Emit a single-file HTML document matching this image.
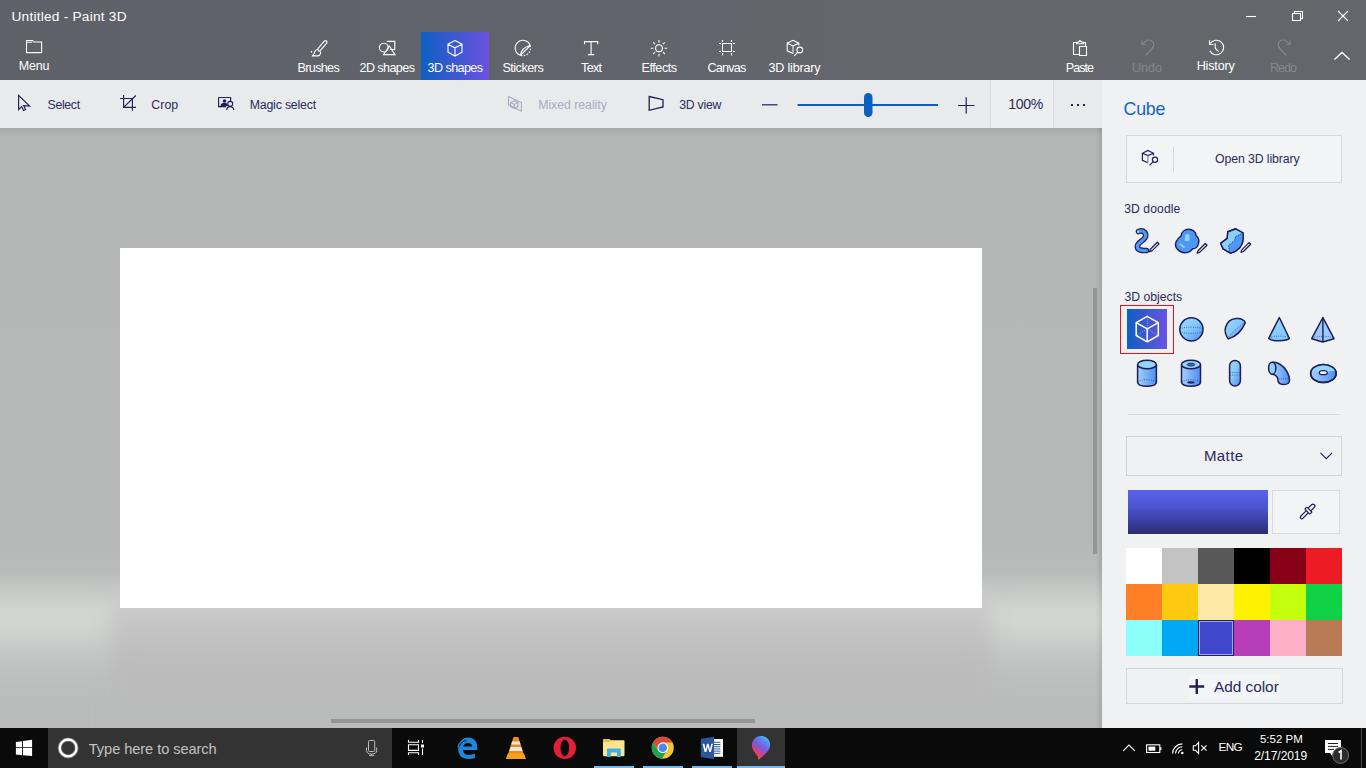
<!DOCTYPE html>
<html><head><meta charset="utf-8">
<style>
*{margin:0;padding:0;box-sizing:border-box}
html,body{width:1366px;height:768px;overflow:hidden;font-family:"Liberation Sans",sans-serif;background:#b6b8b7;position:relative}
.a{position:absolute}
.t{position:absolute;white-space:nowrap;line-height:1}
#hdr{left:0;top:0;width:1366px;height:80px;background:linear-gradient(90deg,#5e6168 0%,#60636a 35%,#64666c 65%,#66676d 80%,#64666c 100%)}
#hl{left:421px;top:32px;width:68px;height:48px;background:linear-gradient(90deg,#0d5fc3,#2f5acb 35%,#6a52e2)}
#tb2{left:0;top:80px;width:1102px;height:48px;background:#e9eaec}
#cv{left:0;top:128px;width:1102px;height:600px;background:linear-gradient(180deg,#b5b7b6 0px,#b6b8b7 410px,#babcbb 445px,#c8cac8 465px,#d2d4d2 480px,#d4d6d4 492px,#cfd1cf 505px,#c5c7c6 525px,#bec0bf 548px,#babcbb 575px,#babcbb 600px)}
#rp{left:1102px;top:80px;width:264px;height:648px;background:#f0f1f3}
#task{left:0;top:728px;width:1366px;height:40px;background:#0a0a0a}
.lbl{font-size:11.3px;color:#fff;text-align:center;width:68px}
.nv{color:#2a2a5c}
</style></head><body>
<div id="hdr" class="a"></div>
<div id="hl" class="a"></div>

<div id="tb2" class="a"></div>
<div class="a" style="left:990px;top:80px;width:64px;height:48px;border-left:1px solid #d9dce4;border-right:1px solid #d9dce4;background:#eceef0"></div>

<div id="cv" class="a"></div>
<div class="a" style="left:110px;top:598px;width:882px;height:160px;background:linear-gradient(180deg,#c9cac9 0px,#c8c9c8 12px,#c0c1c0 40px,#babbba 70px,#babcbb 160px);filter:blur(10px)"></div>
<div class="a" style="left:0;top:128px;width:1102px;height:8px;background:linear-gradient(180deg,rgba(0,0,0,0.08),rgba(0,0,0,0))"></div>
<div class="a" style="left:120px;top:248px;width:862px;height:360px;background:#fff"></div>
<div class="a" style="left:331px;top:719px;width:424px;height:4px;background:#959595"></div>
<div class="a" style="left:1093px;top:288px;width:4px;height:266px;background:#959595"></div>

<div class="a" style="left:1096px;top:128px;width:6px;height:600px;background:linear-gradient(90deg,rgba(0,0,0,0),rgba(0,0,0,0.1))"></div>
<div id="rp" class="a"></div>
<div class="a" style="left:1126px;top:135px;width:216px;height:48px;border:1px solid #d6d7db;background:#f3f4f6"></div>
<div class="a" style="left:1173px;top:147px;width:1px;height:25px;background:#d6d7db"></div>
<div class="a" style="left:1120px;top:305px;width:54px;height:49px;border:1px solid #e8121e"></div>
<div class="a" style="left:1127px;top:309px;width:40px;height:40px;background:linear-gradient(90deg,#0d5fc3,#2f5acb 35%,#6a52e2)"></div>
<div class="a" style="left:1128px;top:414px;width:212px;height:1px;background:#d8d9de"></div>
<div class="a" style="left:1126px;top:436px;width:216px;height:40px;border:1px solid #cfd3dc"></div>
<div class="a" style="left:1128px;top:490px;width:140px;height:44px;background:linear-gradient(180deg,#5b63ef,#4a51c8 45%,#2b2b72)"></div>
<div class="a" style="left:1272px;top:490px;width:68px;height:44px;border:1px solid #d8d9dd;background:#f3f4f6"></div>
<div class="a" style="left:1126px;top:548px;width:216px;height:108px;display:grid;grid-template-columns:repeat(6,36px);grid-template-rows:repeat(3,36px)">
<div style="background:#fff"></div><div style="background:#c3c3c3"></div><div style="background:#585858"></div><div style="background:#000"></div><div style="background:#880015"></div><div style="background:#ed1c24"></div>
<div style="background:#ff7f27"></div><div style="background:#ffc90e"></div><div style="background:#fde9a5"></div><div style="background:#fff200"></div><div style="background:#c4ff0e"></div><div style="background:#0ed145"></div>
<div style="background:#8cfffb"></div><div style="background:#00a8f3"></div><div style="background:#3f48cc;border:1px solid #1c1f5c;box-shadow:inset 0 0 0 1px #a3a8f0"></div><div style="background:#b83dba"></div><div style="background:#ffaec8"></div><div style="background:#b97a56"></div>
</div>
<div class="a" style="left:1126px;top:668px;width:217px;height:36px;border:1px solid #d6d7db"></div>
<div class="a" style="left:1189px;top:675px;width:91px;height:24px;background:#f4f5f7"></div>

<div id="task" class="a"></div>
<div class="a" style="left:48px;top:728px;width:344px;height:40px;background:#333"></div>
<div class="a" style="left:737px;top:728px;width:48px;height:40px;background:#333"></div>
<div class="a" style="left:594px;top:766px;width:40px;height:2px;background:#76b9ed"></div>
<div class="a" style="left:643px;top:766px;width:40px;height:2px;background:#76b9ed"></div>
<div class="a" style="left:692px;top:766px;width:40px;height:2px;background:#76b9ed"></div>
<div class="a" style="left:737px;top:766px;width:48px;height:2px;background:#76b9ed"></div>

<div class="t" style="left:11.5px;top:10.0px;font-size:13.7px;letter-spacing:0.22px;color:#fff;">Untitled - Paint 3D</div>
<div class="t" style="left:18.7px;top:60.0px;font-size:12.5px;letter-spacing:-0.17px;color:#fff;">Menu</div>
<div class="t" style="left:297.6px;top:61.8px;font-size:12.6px;letter-spacing:-0.68px;color:#fff;">Brushes</div>
<div class="t" style="left:359.5px;top:61.8px;font-size:12.6px;letter-spacing:-0.59px;color:#fff;">2D shapes</div>
<div class="t" style="left:427.6px;top:61.8px;font-size:12.6px;letter-spacing:-0.59px;color:#fff;">3D shapes</div>
<div class="t" style="left:502.4px;top:61.8px;font-size:12.6px;letter-spacing:-0.49px;color:#fff;">Stickers</div>
<div class="t" style="left:581.0px;top:61.8px;font-size:12.6px;letter-spacing:-0.67px;color:#fff;">Text</div>
<div class="t" style="left:641.6px;top:61.8px;font-size:12.6px;letter-spacing:-0.47px;color:#fff;">Effects</div>
<div class="t" style="left:707.6px;top:61.8px;font-size:12.6px;letter-spacing:-0.82px;color:#fff;">Canvas</div>
<div class="t" style="left:768.4px;top:61.8px;font-size:12.6px;letter-spacing:-0.19px;color:#fff;">3D library</div>
<div class="t" style="left:1065.7px;top:61.8px;font-size:12.6px;letter-spacing:-0.95px;color:#fff;">Paste</div>
<div class="t" style="left:1132.0px;top:61.8px;font-size:12.6px;letter-spacing:0.0px;color:#85878d;">Undo</div>
<div class="t" style="left:1196.7px;top:60.0px;font-size:12.6px;letter-spacing:-0.17px;color:#fff;">History</div>
<div class="t" style="left:1270.0px;top:61.8px;font-size:12.6px;letter-spacing:-1.0px;color:#85878d;">Redo</div>
<div class="t" style="left:47.5px;top:99.0px;font-size:12.3px;letter-spacing:-0.32px;color:#2a2a5c;">Select</div>
<div class="t" style="left:151.3px;top:99.0px;font-size:12.3px;letter-spacing:0.07px;color:#2a2a5c;">Crop</div>
<div class="t" style="left:249.7px;top:99.0px;font-size:12.3px;letter-spacing:-0.17px;color:#2a2a5c;">Magic select</div>
<div class="t" style="left:538.2px;top:99.0px;font-size:12.3px;letter-spacing:-0.03px;color:#a9abc4;">Mixed reality</div>
<div class="t" style="left:679.3px;top:99.0px;font-size:12.3px;letter-spacing:-0.28px;color:#2a2a5c;">3D view</div>
<div class="t" style="left:1008.3px;top:97.2px;font-size:14.1px;letter-spacing:-0.37px;color:#2a2a5c;">100%</div>
<div class="t" style="left:1123.6px;top:101.0px;font-size:17.8px;letter-spacing:-0.27px;color:#1565c0;">Cube</div>
<div class="t" style="left:1215.0px;top:153.0px;font-size:12.3px;letter-spacing:-0.11px;color:#2a2a5c;">Open 3D library</div>
<div class="t" style="left:1124.2px;top:203.0px;font-size:12.1px;letter-spacing:0.12px;color:#2a2a5c;">3D doodle</div>
<div class="t" style="left:1124.6px;top:291.0px;font-size:12.2px;letter-spacing:0.0px;color:#2a2a5c;">3D objects</div>
<div class="t" style="left:1203.9px;top:448.0px;font-size:15.0px;letter-spacing:0.42px;color:#2a2a5c;">Matte</div>
<div class="t" style="left:1214.0px;top:679.0px;font-size:15.4px;letter-spacing:-0.03px;color:#2a2a5c;">Add color</div>
<div class="t" style="left:88.8px;top:741.6px;font-size:14.6px;letter-spacing:-0.06px;color:#c2c2c2;">Type here to search</div>
<div class="t" style="left:1218.6px;top:742.4px;font-size:11.8px;letter-spacing:-0.8px;color:#fff;">ENG</div>
<div class="t" style="left:1259.9px;top:733.6px;font-size:11.5px;letter-spacing:0.02px;color:#fff;">5:52 PM</div>
<div class="t" style="left:1254.2px;top:750.4px;font-size:12px;letter-spacing:-0.05px;color:#fff;">2/17/2019</div>
<svg class="a" style="left:0;top:0" width="1366" height="768" viewBox="0 0 1366 768" fill="none">
<g stroke="#fff" stroke-width="1.1" fill="none">
<!-- window controls -->
<path d="M1246 16.5H1256"/>
<path d="M1292.5 13.5H1300.5V20.5H1292.5Z M1294.5 13.5V11.5H1302.5V18.5H1300.5"/>
<path d="M1338 11L1348 21M1348 11L1338 21"/>
<!-- folder -->
<path d="M26.5 40.5H32.5L33.8 42H41.6V52.6H26.5Z M26.8 42.3H32"/>
<!-- brush -->
<rect x="-6.3" y="-1.55" width="12.6" height="3.1" rx="1.55" transform="translate(322.4 45.8) rotate(130.6)"/>
<path d="M318.3 49.3C316.2 49.5 314.6 51.2 314.3 53.2L312.5 55.9H317.6C319.6 55.9 320.9 53.9 320.6 51.6"/>
<rect x="310.9" y="51" width="1.2" height="1.6" fill="#fff" stroke="none"/>
<!-- 2d shapes -->
<circle cx="383.8" cy="47.6" r="4.4"/>
<path d="M386.6 41.4H394.8V49.5H390"/>
<path d="M389.3 46L395 54.6H383.6Z"/>
<!-- 3d shapes cube -->
<path d="M455 40.5L462 44.2V52.2L455 56L448 52.2V44.2Z M448 44.2L455 47.8L462 44.2 M455 47.8V56"/>
<!-- stickers -->
<path d="M530.2 45.5A7.7 7.7 0 1 0 520.5 55.3"/>
<path d="M520.5 55.3Q521.5 47.5 530.2 45.5M520.5 55.3L530.2 45.5"/>
<path d="M530.2 45.5A7.7 7.7 0 0 1 520.5 55.3" stroke-dasharray="1.6 1.4"/>
<!-- text T -->
<path d="M584.5 44.2V41.6H597.8V44.2 M591.1 41.6V54.5 M588 54.6H594.2"/>
<!-- effects sun -->
<circle cx="659" cy="48.2" r="3.4"/>
<path d="M659 40V42.6M659 53.8V56.4M650.8 48.2H653.4M664.6 48.2H667.2M653.2 42.4L655 44.2M663 52.2L664.8 54M664.8 42.4L663 44.2M655 52.2L653.2 54"/>
<!-- canvas -->
<path d="M722.5 43.5H731.5V51.5H722.5Z"/>
<path d="M722.5 40V42M731.5 40V42M722.5 53V55.5M731.5 53V55.5M719 43.5H721M733 43.5H735M719 51.5H721M733 51.5H735"/>
<!-- 3d library -->
<path d="M798.8 45.6V43.2L793 40.3L787.2 43.2V50.8L793 53.6 M787.2 43.2L793 46L798.8 43.2"/><path d="M793 46V53.6" stroke="#c8c9cc" stroke-width="1.5"/>
<circle cx="799.8" cy="50" r="2.9"/>
<path d="M797.8 52.2L794.3 55.9"/>
<!-- paste -->
<path d="M1076.5 42.5H1073.5V54.5H1079 M1083.5 42.5H1085.5V46 M1076.5 43.8V42.2H1078.2L1080 40.5L1081.8 42.2H1083.5V43.8Z"/>
<path d="M1079.5 46.5H1086.5V55.5H1079.5Z"/>
<!-- history -->
<path d="M1210.2 43.5A7.3 7.3 0 1 1 1209.8 50.8"/>
<path d="M1209.5 40.3V44.5H1213.6"/>
<path d="M1215.2 43.2V48.2L1218.6 51.6"/>
<!-- chevron -->
<path d="M1334.4 59.5L1342 52.5L1349.6 59.5" stroke-width="1.3"/>
</g>
<g stroke="#201f58" stroke-width="1.15" fill="none">
<path d="M18.6 95.4V109.6L21.6 106.6L23.6 110.6L25.6 109.6L23.6 105.6L29.6 106Z"/>
<path d="M120 98.5H132.4V110.8M123.6 95V107.4H136M123.6 107.4L135.8 95.5"/>
<path d="M218.6 97.5H230.6V102M226 106.6H218.6V97.5"/>
<path d="M221 106.5C221 104.5 222.5 103.4 224.5 103.4C226.3 103.4 227.3 104.4 227.5 105.5Z" fill="#201f58"/>
<circle cx="224.5" cy="101" r="1.8" fill="#201f58" stroke="none"/>
<circle cx="230.2" cy="103.8" r="2.5"/>
<path d="M226.6 109.8C227 107.6 228.3 106.6 230.2 106.6C232.1 106.6 233.4 107.6 233.8 109.8"/>
<path d="M649.2 96.5L663 99.7V107L649.2 110.3Z" stroke-width="1.3"/>
<rect x="1071" y="104" width="2" height="2" fill="#201f58" stroke="none"/>
<rect x="1077" y="104" width="2" height="2" fill="#201f58" stroke="none"/>
<rect x="1083" y="104" width="2" height="2" fill="#201f58" stroke="none"/>
<path d="M762 104.8H777.5" stroke-width="1.2"/>
<path d="M958 105.5H974.5M966.2 97.3V113.6" stroke-width="1.2"/>
</g>
<g stroke="#a7a9c0" stroke-width="1.1" fill="none">
<path d="M508.5 96.5L521.4 102.6V111.2L508.5 104.8Z"/>
<path d="M514.3 100.8L518 102.6V106.6L514.3 108.4L510.6 106.6V102.6Z M510.6 102.6L514.3 104.4L518 102.6M514.3 104.4V108.4"/>
</g>
<path d="M797.5 105H938" stroke="#0b5fc1" stroke-width="2"/>
<rect x="864" y="93" width="8.5" height="24" rx="4.2" fill="#0b5fc1"/>
<defs>
<linearGradient id="gb" x1="0" y1="0" x2="1" y2="0"><stop offset="0" stop-color="#a6d0fd"/><stop offset="1" stop-color="#4b8ff4"/></linearGradient>
<linearGradient id="gbt" x1="0" y1="0" x2="0" y2="1"><stop offset="0" stop-color="#93d5fd"/><stop offset="1" stop-color="#7fc6fc"/></linearGradient>
<linearGradient id="gs" x1="0" y1="0" x2="1" y2="1"><stop offset="0" stop-color="#9ad9fe"/><stop offset="0.45" stop-color="#86cafc"/><stop offset="1" stop-color="#4d8ff3"/></linearGradient>
</defs>
<!-- right panel navy icons -->
<g stroke="#201f58" stroke-width="1.2" fill="none">
<path d="M1153.5 155.6V153.3L1147.9 150.5L1142.4 153.3V160.4L1147.9 162.8 M1142.4 153.3L1147.9 155.6L1153.5 153.3"/>
<path d="M1147.9 155.6V162.6" stroke="#8587a8"/>
<circle cx="1155" cy="159.7" r="2.6"/>
<path d="M1153 161.8L1149.5 165.3"/>
<g transform="translate(1308.9 510.1) rotate(-45)">
<path d="M-2.2 -1.5H-9.8C-11 -1.5 -11.6 -0.8 -11.6 0C-11.6 0.8 -11 1.5 -9.8 1.5H-2.2"/>
<rect x="-2.2" y="-3.6" width="3" height="7.2" rx="0.8"/>
<path d="M0.8 -1.9H5.6C6.9 -1.9 7.7 -1 7.7 0C7.7 1 6.9 1.9 5.6 1.9H0.8"/>
</g>
<path d="M1320.5 452.8L1326.3 458.6L1332.1 452.8" stroke-width="1.1"/>
<path d="M1189.3 686.5H1204.2M1196.75 679V694" stroke-width="2.4"/>
</g>
<!-- doodles -->
<path d="M1138.5 231.5C1143.5 229.5 1147.5 233.5 1144.8 238C1142.6 241.4 1137.4 242.6 1137.4 246.5C1137.4 250.4 1142 250.7 1146.4 250.5" stroke="#1f1d52" stroke-width="5.6" stroke-linecap="round" fill="none"/>
<path d="M1138.5 231.5C1143.5 229.5 1147.5 233.5 1144.8 238C1142.6 241.4 1137.4 242.6 1137.4 246.5C1137.4 250.4 1142 250.7 1146.4 250.5" stroke="#4f97f6" stroke-width="3.2" stroke-linecap="round" fill="none"/>
<circle cx="1138.2" cy="231.7" r="1.3" fill="#8fd2fd"/>
<path d="M1181 236C1181.5 231.5 1185 229.3 1188.6 229.3C1192.8 229.3 1195.8 232 1196 235.5C1198.5 237.5 1199.2 240.5 1198.6 243C1198 246.5 1195.5 248.8 1192.5 248.8C1190.8 251.2 1188 252.8 1184.5 252.8C1182 252.8 1179.5 251.6 1177.6 249.6C1175.5 247.3 1175 244.5 1176.2 241.5C1177.2 239 1179 237.5 1181 236Z" fill="#4f97f6" stroke="#1f1d52" stroke-width="1.4"/>
<path d="M1185.5 235C1186.5 233.5 1188.6 233.6 1189.5 235.5L1189.6 240.3C1188.4 241.5 1186.3 241.5 1184.5 240.2Z" fill="#8dd1fd"/>
<path d="M1180.5 244.2L1184 247.2" stroke="#8dd1fd" stroke-width="1.8" stroke-linecap="round"/>
<path d="M1220.6 243.3L1227.2 238.3L1227.7 231.8L1235.5 228.8L1243 232.8C1243.8 239 1243 244 1239.5 248C1237 250.8 1233.5 252.5 1230.6 253.2L1223 248.8Z" fill="#8ad0fd" stroke="#1f1d52" stroke-width="1.3"/>
<path d="M1242.8 233C1240.5 234 1238 235 1235.5 236.5L1234.5 240.5L1228.5 245.5L1229.5 252.8C1233.5 252 1237 250.5 1239.5 248C1243 244 1243.8 239 1243 232.8Z" fill="#4f97f6"/>
<path d="M1220.6 243.3L1227.2 238.3L1227.7 231.8L1235.5 228.8L1243 232.8C1243.8 239 1243 244 1239.5 248C1237 250.8 1233.5 252.5 1230.6 253.2L1223 248.8Z" fill="none" stroke="#1f1d52" stroke-width="1.3"/>
<path d="M1242.5 233.2L1235.5 236.6L1234.5 240.6L1228.6 245.4L1229.6 252.6" stroke="#1f1d52" stroke-width="0.8" stroke-dasharray="1 1"/>
<g stroke="#1f1d52" stroke-width="1.25" fill="#f0f1f3" stroke-linejoin="round">
<path d="M1157.3 242.2L1159 243.9L1152 250.9L1149.6 251.7L1150.4 249.3Z"/>
<path d="M1205.3 243.5L1207 245.2L1199.6 252.4L1197.2 253.2L1198 250.8Z"/>
<path d="M1249 242.6L1250.7 244.3L1243.4 251.5L1241 252.3L1241.8 249.9Z"/>
</g>
<!-- 3d objects -->
<g stroke="#fff" stroke-width="1.5" fill="none" stroke-linejoin="round">
<path d="M1147.2 316.3L1158.3 322.6V335.5L1147.2 341.8L1136.2 335.5V322.6Z M1136.2 322.6L1147.2 328.9L1158.3 322.6 M1147.2 328.9V341.8"/>
</g>
<g stroke="#fff" stroke-width="0.7" stroke-dasharray="1 1.2" fill="none" opacity="0.7">
<path d="M1147.2 316.5V329 M1136.5 335.3L1147.2 329L1158 335.3"/>
</g>
<g stroke="#1f1d52" stroke-width="1.5" stroke-linejoin="round">
<circle cx="1191.4" cy="329.3" r="11.6" fill="url(#gs)"/>
<path d="M1235.9 318.6C1241 318 1244 320 1245.3 322.6C1242 330.5 1236 336.5 1228.4 338.9C1225.6 335.5 1224.5 331.5 1225.5 327.5C1226.8 322.5 1230.5 319.2 1235.9 318.6Z" fill="url(#gs)"/>
<path d="M1279.3 317.5L1289.3 338.3C1287 341.6 1271.5 341.6 1268.7 338.3Z" fill="url(#gbt)"/>
<path d="M1322.9 317.5L1334 338.7L1322.9 342L1311.7 338.7Z" fill="#9cc9fd"/>
<path d="M1322.9 317.5V342" stroke-width="1.4"/>
<path d="M1137.6 364.5V382C1137.6 387.8 1156.4 387.8 1156.4 382V364.5" fill="url(#gb)"/>
<ellipse cx="1147" cy="364.5" rx="9.4" ry="4.2" fill="#93d5fd"/>
<path d="M1181.5 364.5V382C1181.5 387.8 1200.5 387.8 1200.5 382V364.5" fill="url(#gb)"/>
<ellipse cx="1191" cy="364.5" rx="9.5" ry="4.2" fill="#93d5fd"/>
<rect x="1229.6" y="360.4" width="10.8" height="25.6" rx="5.4" fill="url(#gs)"/>
<path d="M1272.5 362.2C1280.5 361.8 1288.5 370 1289.5 379.5C1290 383.5 1287 384.5 1283.5 384.5C1279.5 384.5 1277.8 382 1277.8 379C1277.5 376.5 1275.5 374.8 1272.5 374.2Z" fill="url(#gb)"/>
<ellipse cx="1272.2" cy="368.2" rx="3.6" ry="6" fill="#8fd2fd"/>
<ellipse cx="1323.4" cy="373.4" rx="12.8" ry="9" fill="url(#gb)"/>
</g>
<path d="M1310.8 371.5C1312 366 1317 364.5 1323.4 364.5C1330 364.5 1334.8 366 1336 371.5C1333 371 1330 370.6 1327.6 372.8H1319.2C1317 370.6 1314 371 1310.8 371.5Z" fill="#93d5fd"/>
<ellipse cx="1323.4" cy="373.4" rx="12.8" ry="9" fill="none" stroke="#1f1d52" stroke-width="1.5"/>
<ellipse cx="1323.3" cy="372.7" rx="4" ry="2" fill="#fff" stroke="#1f1d52" stroke-width="1.2"/>
<ellipse cx="1191" cy="364.6" rx="3.8" ry="1.5" fill="#3d68c8" stroke="#1f1d52" stroke-width="0.8"/>
<ellipse cx="1191" cy="382.4" rx="3.6" ry="1.1" fill="#1f1d52"/>
<g stroke="#1f1d52" stroke-width="0.8" stroke-dasharray="0.9 1.3" fill="none" opacity="0.75">
<path d="M1180 329C1184 326.5 1199 326.5 1203 329 M1180 331.5C1184 334 1199 334 1203 331.5"/>
<path d="M1229 336.5C1233 332 1240 326 1244 322.8"/>
<path d="M1269.5 337.6C1273 335.6 1285.5 335.6 1289 337.6"/>
<path d="M1312.5 338C1317 335.8 1329 335.8 1333.5 338"/>
<path d="M1138 382C1141 379 1153 379 1156 382"/>
<path d="M1182 382C1185 379 1197 379 1200 382"/>
<path d="M1230 372.5H1240M1230 375H1240"/>
<path d="M1278.5 378.8H1289"/>
</g>
<!-- taskbar -->
<g fill="#fff">
<path d="M15.9 742L22.05 741.2V747.2H15.9Z M22.9 741.1L32.1 739.8V747.2H22.9Z M15.9 748H22.05V755.2L15.9 754.5Z M22.9 748H32.1V756.1L22.9 755.3Z"/>
</g>
<circle cx="68.15" cy="747.9" r="8.5" stroke="#a0a0a0" stroke-width="4" fill="none" opacity="0.6"/>
<circle cx="68.15" cy="747.9" r="8.4" stroke="#fff" stroke-width="2.3" fill="none"/>
<g stroke="#bdbdbd" stroke-width="1" fill="none">
<rect x="368.5" y="740.5" width="6.2" height="11" rx="1"/>
<path d="M366.5 747.5V750.5C366.5 753 368.5 754 371.6 754C374.7 754 376.7 753 376.7 750.5V747.5M371.6 754V755.6M369 755.6H374.2"/>
</g>
<g stroke="#fff" stroke-width="1.1" fill="none">
<path d="M408.5 740V742.2H418.5V740M408.5 744.8H418.5V750.4H408.5Z M408.5 755V752.7H418.5V755 M422.5 740V743M422.5 748.5V755"/>
</g>
<rect x="421" y="744.5" width="3" height="3" fill="#fff"/>
<!-- edge -->
<path d="M477.3 749.9H462.9C463.3 753.3 465.8 755 469.3 755C471.5 755 473.5 754.5 475 753.6V757.8C473.2 758.6 470.8 759 468.5 759C461.8 759 458.2 755 458.2 749C458.2 742.5 462.5 737.6 468 737.6C473.8 737.6 477.3 741.5 477.3 747.3Z" fill="#1e86dc"/>
<path d="M463.2 746.6C463.6 744.4 465.5 743 468 743C470.5 743 472.2 744.4 472.3 746.6Z" fill="#0a0a0a"/>
<path d="M457.3 747C458.3 742.5 461.8 739.6 466.3 739.8C462.8 741.2 460.5 743.5 459.6 746.6Z" fill="#1e86dc"/>
<path d="M459.3 746.4C460.6 742.6 463.2 740.8 466.4 740.6" stroke="#0a0a0a" stroke-width="0.9" fill="none"/>
<!-- vlc -->
<path d="M513.5 737H518.3L524 755H507.8Z" fill="#f28c18"/>
<path d="M512.2 741.5H519.6L520.6 744.5H511.2Z M510.5 747H521.3L522.6 751H509.3Z" fill="#e6e6e6"/>
<path d="M507.8 753.5H524L526 759H505.8Z" fill="#f6a21a"/>
<!-- opera -->
<ellipse cx="564.8" cy="747.9" rx="11.2" ry="11.2" fill="#e3203a"/>
<ellipse cx="564.8" cy="747.9" rx="4.3" ry="8.4" fill="#0a0a0a"/>
<!-- explorer -->
<path d="M603 740.5C603 739.6 603.5 739 604.4 739H609.4L610.6 740.2H623.5C624 740.2 624.5 740.6 624.5 741.2V755.3C624.5 755.8 624 756.2 623.5 756.2H604C603.5 756.2 603 755.8 603 755.3Z" fill="#ffe48e"/>
<path d="M603 740.5C603 739.6 603.5 739 604.4 739H609.4L611 740.6L609.8 742H603Z" fill="#f0bd3c"/>
<path d="M607 757V749.5C607 748.9 607.5 748.5 608 748.5H619.8C620.4 748.5 620.8 748.9 620.8 749.5V757H617V752.5H610.8V757Z" fill="#38b1ee"/>
<!-- chrome -->
<circle cx="662.8" cy="747.7" r="11" fill="#f4c534"/>
<path d="M662.8 736.7A11 11 0 0 0 653.2 742.3L658.2 750.5L662.8 742.5H672.5A11 11 0 0 0 662.8 736.7Z" fill="#dc4a3c"/>
<path d="M653.2 742.3A11 11 0 0 0 662 758.7L667 750.3L662.8 752.5L658.2 750.5Z" fill="#22a150"/>
<circle cx="662.8" cy="747.7" r="5.4" fill="#fff"/>
<circle cx="662.8" cy="747.7" r="4.3" fill="#4c88ef"/>
<!-- word -->
<rect x="713.5" y="739" width="9.5" height="17.8" fill="#fff"/>
<g stroke="#2b579a" stroke-width="1"><path d="M714 742.3H720.4M714 744.5H720.4M714 746.7H720.4M714 748.9H720.4M714 751.1H720.4M714 753.3H720.4"/></g>
<path d="M700.8 738.8L714 736.8V759.2L700.8 757Z" fill="#2b579a"/>
<path d="M702.5 743.7H704.4L705.6 749.5L707 743.7H708.6L710 749.5L711.2 743.7H712.9L710.9 752H709.2L707.8 746.5L706.4 752H704.6Z" fill="#fff"/>
<!-- paint3d drop -->
<defs>
<linearGradient id="p3" x1="0.85" y1="0" x2="0.25" y2="1"><stop offset="0" stop-color="#2ee3ee"/><stop offset="0.22" stop-color="#5b8cf2"/><stop offset="0.5" stop-color="#7b58de"/><stop offset="0.72" stop-color="#d8407e"/><stop offset="0.86" stop-color="#ef4a52"/><stop offset="1" stop-color="#f8a81c"/></linearGradient>
</defs>
<path d="M761 736C766 736 770.2 739.8 770.2 744.8C770.2 749.5 766.5 753 762.5 756.5C761 757.8 759.8 759 758.5 760C758.8 757.5 757.5 755.5 755.2 753C753 750.5 751.9 748 751.9 745C751.9 740 755.9 736 761 736Z" fill="url(#p3)"/>
<!-- tray -->
<g stroke="#fff" stroke-width="1.1" fill="none">
<path d="M1123.3 750.8L1128.9 745L1134.9 750.8"/>
<rect x="1146.6" y="744.8" width="13.2" height="7.7"/>
<path d="M1172.6 753.6A9.7 9.7 0 0 1 1182.3 743.9M1175.5 753.6A6.8 6.8 0 0 1 1182.3 746.8M1178.4 753.6A3.9 3.9 0 0 1 1182.3 749.7"/>
<path d="M1193.3 745.8H1195.5L1198.6 742.5V753.5L1195.5 750.3H1193.3Z"/>
<path d="M1201.2 745.3L1206.6 750.6M1206.6 745.3L1201.2 750.6"/>
</g>
<rect x="1148.5" y="746.6" width="6.8" height="4.1" fill="#fff"/>
<rect x="1160.2" y="747.2" width="1.2" height="3" fill="#fff"/>
<circle cx="1182.3" cy="753" r="1.3" fill="#fff"/>
<path d="M1325 740H1341V752.9H1334.5L1331.7 755.6L1330 752.9H1325Z" fill="#fff"/>
<path d="M1328 743.5H1338M1328 746.4H1338M1328 749.4H1334" stroke="#0a0a0a" stroke-width="0.9"/>
<circle cx="1340.6" cy="755.4" r="8" fill="#2d2d2d" stroke="#7a7a7a" stroke-width="0.9"/>
<path d="M1338.6 752.5L1341 750.8V759.5" stroke="#fff" stroke-width="1.6" fill="none"/>
<rect x="1361" y="728" width="1" height="40" fill="#4a4a4a"/>
<g stroke="#85878d" stroke-width="1.1" fill="none">
<path d="M1142 40.5V44.5H1146"/>
<path d="M1142.3 44.2L1145.5 41.2C1148.5 38.8 1153.5 40 1153.8 44.5C1154 47 1152 49 1145.5 55.8"/>
<path d="M1290 40.5V44.5H1286"/>
<path d="M1289.7 44.2L1286.5 41.2C1283.5 38.8 1278.5 40 1278.2 44.5C1278 47 1280 49 1286.5 55.8"/>
</g>
</svg>
</body></html>
